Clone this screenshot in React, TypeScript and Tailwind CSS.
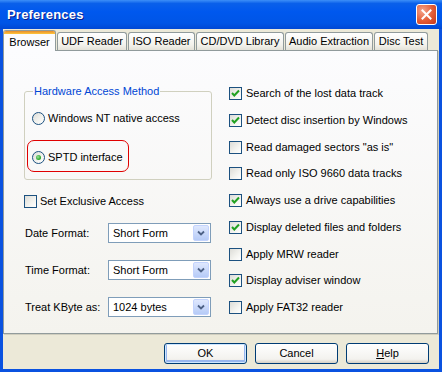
import React from "react";

const font = "font-['Liberation_Sans',Arial,sans-serif]";

const Check: React.FC<{ checked?: boolean }> = ({ checked }) => (
  <span className="w-[13px] h-[13px] shrink-0 border border-[#1c5180] bg-[linear-gradient(135deg,#dcdcd7_0%,#f4f4f0_60%,#ffffff_100%)] flex items-center justify-center">
    {checked && (
      <svg width="9" height="9" viewBox="0 0 9 9">
        <path d="M1 4 L3.3 6.5 L8 1.5" fill="none" stroke="#21a121" strokeWidth="2" />
      </svg>
    )}
  </span>
);

const Radio: React.FC<{ checked?: boolean }> = ({ checked }) => (
  <span className="w-[13px] h-[13px] shrink-0 rounded-full border border-[#1c5180] bg-[linear-gradient(135deg,#dcdcd7_0%,#f4f4f0_60%,#ffffff_100%)] flex items-center justify-center">
    {checked && (
      <span className="w-[5px] h-[5px] rounded-full bg-[radial-gradient(circle_at_40%_40%,#9ae29a,#21a121_70%)]" />
    )}
  </span>
);

const CheckRow: React.FC<{ label: string; checked?: boolean }> = ({ label, checked }) => (
  <div className="flex items-center gap-[4px] h-[13px]">
    <Check checked={checked} />
    <span className="whitespace-nowrap leading-[13px]">{label}</span>
  </div>
);

const Combo: React.FC<{ label: string; value: string }> = ({ label, value }) => (
  <div className="flex items-center h-[20px]">
    <span className="w-[84px] pl-[1px] whitespace-nowrap">{label}</span>
    <div className="w-[103px] h-[20px] border border-[#7f9db9] bg-white flex items-center justify-between p-[1px]">
      <span className="pl-[3px] whitespace-nowrap">{value}</span>
      <span className="w-[16px] h-[16px] rounded-[2px] border border-[#c3d3fd] bg-[linear-gradient(to_bottom,#dfe8fe,#b6cbf7)] flex items-center justify-center">
        <svg width="8" height="6" viewBox="0 0 8 6">
          <path d="M1 1.5 L4 4.5 L7 1.5" fill="none" stroke="#4d6185" strokeWidth="1.8" />
        </svg>
      </span>
    </div>
  </div>
);

const Tab: React.FC<{ label: string; width: string; selected?: boolean }> = ({ label, width, selected }) =>
  selected ? (
    <div className={`${width} h-[21px] -mb-[1px] relative z-10 rounded-t-[3px] border-x border-t border-[#919b9c] bg-[#fcfcfe] overflow-hidden flex flex-col`}>
      <div className="h-[3px] bg-[linear-gradient(to_bottom,#e68b2c,#ffc73c)]" />
      <div className="flex-1 flex items-center justify-center pb-[1px]">{label}</div>
    </div>
  ) : (
    <div className={`${width} h-[18px] rounded-t-[3px] border-x border-t border-[#919b9c] bg-[linear-gradient(to_bottom,#ffffff,#f3f2ec_70%,#e4e2d8)] flex items-center justify-center whitespace-nowrap`}>
      {label}
    </div>
  );

const Btn: React.FC<{ children: React.ReactNode; primary?: boolean }> = ({ children, primary }) => (
  <button
    className={`w-[83px] h-[21px] rounded-[3px] border border-[#003c74] bg-[linear-gradient(to_bottom,#ffffff,#f3f2ee_80%,#d6d0c5)] flex items-center justify-center ${
      primary ? "shadow-[inset_0_0_0_1px_#cee7ff,inset_0_-1px_0_2px_#98b6ee]" : ""
    }`}
  >
    {children}
  </button>
);

export default function App() {
  return (
    <div className={`w-[442px] h-[372px] bg-[#0a52e0] flex flex-col text-[11px] text-black ${font}`}>
      <div className="h-[29px] shrink-0 bg-[linear-gradient(to_bottom,#3d8ff8_0%,#0a60ea_12%,#0058ee_40%,#0055e6_80%,#0048d4_100%)] flex items-center justify-between pl-[7px] pr-[5px]">
        <span className="text-white font-bold text-[13px] tracking-[0.2px] [text-shadow:1px_1px_0_#0a1e8c]">Preferences</span>
        <div className="w-[21px] h-[21px] rounded-[3px] border border-white bg-[radial-gradient(circle_at_30%_30%,#f5a58c,#e35b35_55%,#c4381b)] flex items-center justify-center">
          <svg width="11" height="11" viewBox="0 0 11 11">
            <path d="M1.5 1.5 L9.5 9.5 M9.5 1.5 L1.5 9.5" stroke="#ffffff" strokeWidth="2" strokeLinecap="square" />
          </svg>
        </div>
      </div>

      <div className="flex-1 mx-[3px] mb-[3px] bg-[#ece9d8] flex flex-col">
        <div className="flex items-end h-[21px] gap-[1px]">
          <Tab label="Browser" width="w-[53px]" selected />
          <Tab label="UDF Reader" width="w-[70px]" />
          <Tab label="ISO Reader" width="w-[67px]" />
          <Tab label="CD/DVD Library" width="w-[88px]" />
          <Tab label="Audio Extraction" width="w-[88px]" />
          <Tab label="Disc Test" width="w-[54px]" />
        </div>

        <div className="h-[284px] mr-[1px] border border-[#919b9c] bg-[linear-gradient(to_bottom,#fcfcfe,#f4f3ee)] shadow-[1px_1px_0_#d0cebf] flex">
          <div className="w-[225px] pl-[20px] pt-[34px] flex flex-col">
            <fieldset className="w-[188px] border border-[#d0d0bf] rounded-[3px] px-0 pb-[7px]">
              <legend className="ml-[8px] px-[1px] text-[#0046d5] leading-[13px]">Hardware Access Method</legend>
              <div className="flex items-center gap-[3px] h-[13px] mt-[14px] ml-[7px]">
                <Radio />
                <span className="whitespace-nowrap">Windows NT native access</span>
              </div>
              <div className="mt-[15px] ml-[2px] w-[102px] h-[32px] border border-[#e00000] rounded-[7px] flex items-center pl-[4px] pt-[2px] gap-[3px]">
                <Radio checked />
                <span className="whitespace-nowrap">SPTD interface</span>
              </div>
            </fieldset>

            <div className="flex items-center gap-[3px] h-[13px] mt-[15px]">
              <Check />
              <span className="whitespace-nowrap">Set Exclusive Access</span>
            </div>

            <div className="mt-[15px] flex flex-col gap-[17px]">
              <Combo label="Date Format:" value="Short Form" />
              <Combo label="Time Format:" value="Short Form" />
              <Combo label="Treat KByte as:" value="1024 bytes" />
            </div>
          </div>

          <div className="pt-[36px] flex flex-col gap-[13.75px]">
            <CheckRow label="Search of the lost data track" checked />
            <CheckRow label="Detect disc insertion by Windows" checked />
            <CheckRow label={'Read damaged sectors "as is"'} />
            <CheckRow label="Read only ISO 9660 data tracks" />
            <CheckRow label="Always use a drive capabilities" checked />
            <CheckRow label="Display deleted files and folders" checked />
            <CheckRow label="Apply MRW reader" />
            <CheckRow label="Display adviser window" checked />
            <CheckRow label="Apply FAT32 reader" />
          </div>
        </div>

        <div className="flex justify-end gap-[8px] pr-[10px] mt-[9px]">
          <Btn primary>OK</Btn>
          <Btn>Cancel</Btn>
          <Btn>
            <span>
              <span className="underline">H</span>elp
            </span>
          </Btn>
        </div>
      </div>
    </div>
  );
}
